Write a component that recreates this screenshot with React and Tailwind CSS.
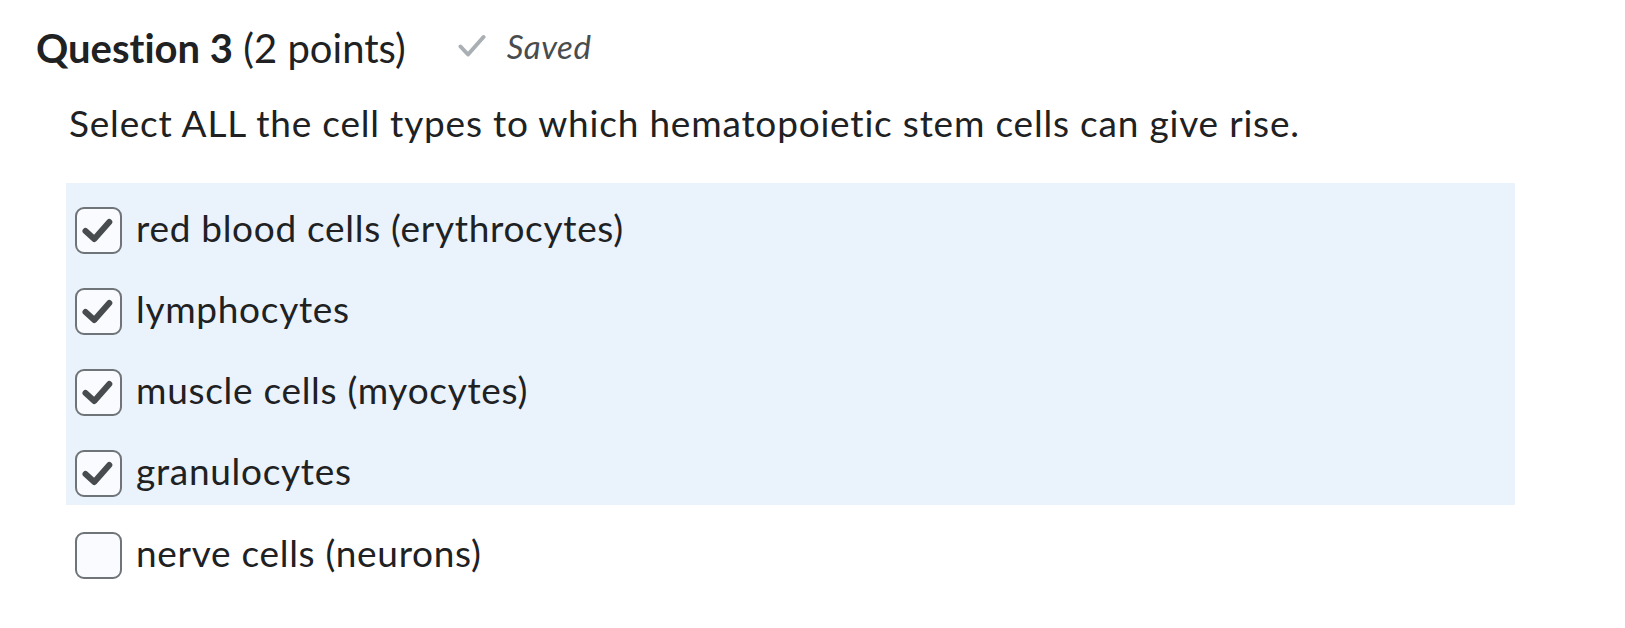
import React from 'react';

const options = [
  { label: 'red blood cells (erythrocytes)', checked: true },
  { label: 'lymphocytes', checked: true },
  { label: 'muscle cells (myocytes)', checked: true },
  { label: 'granulocytes', checked: true },
  { label: 'nerve cells (neurons)', checked: false },
];

const CheckBox = ({ checked }) => (
  <div className="w-[47px] h-[47px] shrink-0 rounded-[9px] border-2 border-[#6e7477] bg-[#f9fbff] flex items-center justify-center">
    {checked && (
      <svg width="43" height="43" viewBox="0 0 43 43" fill="none">
        <path d="M8.5 22 L17.3 30 L32.3 13" stroke="#494c4e" strokeWidth="6" strokeLinecap="round" strokeLinejoin="round" />
      </svg>
    )}
  </div>
);

const Option = ({ label, checked }) => (
  <label className="flex items-center gap-[14px] h-[47px] pl-[9px]">
    <CheckBox checked={checked} />
    <span className="text-[37px] leading-none tracking-[0.7px] text-[#202122] mb-[6px]">{label}</span>
  </label>
);

export default function App() {
  const selected = options.filter((o) => o.checked);
  const rest = options.filter((o) => !o.checked);

  return (
    <div className="min-h-screen bg-white font-['Lato','Noto_Sans',sans-serif] text-[#202122] [font-variant-ligatures:none]">
      <div className="pt-[28px] pl-[36px]">
        {/* Header */}
        <div className="flex items-start h-[40px]">
          <h2 className="text-[40px] leading-none">
            <span className="font-bold">Question 3</span> <span>(2 points)</span>
          </h2>
          <div className="flex items-start ml-[52px] gap-[21px]">
            <svg width="28" height="24" viewBox="0 0 28 24" fill="none" className="mt-[6px]">
              <path d="M2.5 12.5 L10 20.5 L25.5 3" stroke="#a9afb3" strokeWidth="4" strokeLinecap="round" strokeLinejoin="round" />
            </svg>
            <span className="italic text-[33px] leading-none tracking-[0.5px] text-[#494c4e] mt-[2px]">Saved</span>
          </div>
        </div>

        <div className="pl-[33px] pr-[110px]">
          <p className="mt-[36px] text-[37px] leading-none tracking-[0.8px]">
            Select ALL the cell types to which hematopoietic stem cells can give rise.
          </p>

          <div className="mt-[42px] -ml-[3px]">
            <div className="bg-[#eaf2fb] pt-[24px] pb-[8px] flex flex-col gap-[34px]">
              {selected.map((o) => (
                <Option key={o.label} {...o} />
              ))}
            </div>
            <div className="pt-[27px] flex flex-col">
              {rest.map((o) => (
                <Option key={o.label} {...o} />
              ))}
            </div>
          </div>
        </div>
      </div>
    </div>
  );
}
